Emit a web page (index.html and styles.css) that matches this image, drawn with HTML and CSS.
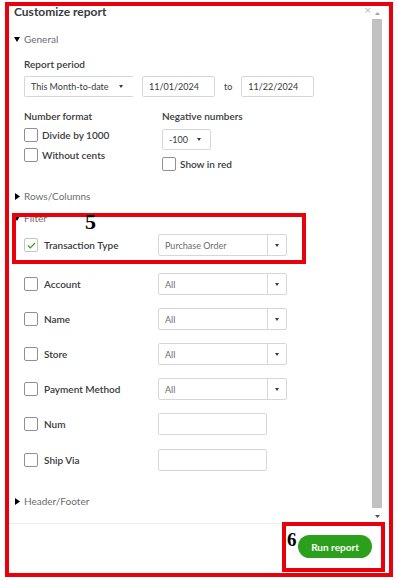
FILE: index.html
```html
<!DOCTYPE html>
<html lang="en">
<head>
  <meta charset="UTF-8">
  <meta name="viewport" content="width=device-width, initial-scale=1.0">
  <title>Customize report</title>
  <link rel="stylesheet" href="styles.css">
</head>
<body>

<div class="frame">
  <div class="main">
    <div class="content">
      <h1 class="title">Customize report</h1>

      <div class="section-head open">
        <svg class="tri" width="6" height="5" viewBox="0 0 6 5"><path d="M0 0h6L3 5z"/></svg>
        General
      </div>

      <div class="section-body">
        <div class="label period-label">Report period</div>
        <div class="period-row">
          <div class="select period-select">This Month-to-date <span class="caret"></span></div>
          <div class="input date date-from">11/01/2024</div>
          <span class="to">to</span>
          <div class="input date">11/22/2024</div>
        </div>

        <div class="number-grid">
          <div class="col col-left">
            <div class="label">Number format</div>
            <label class="check-row first"><span class="box"></span>Divide by 1000</label>
            <label class="check-row"><span class="box"></span>Without cents</label>
          </div>
          <div class="col">
            <div class="label">Negative numbers</div>
            <div class="select neg-select">-100 <span class="caret"></span></div>
            <label class="check-row red-row"><span class="box"></span>Show in red</label>
          </div>
        </div>
      </div>

      <div class="section-head closed rows-head">
        <svg class="tri" width="5" height="7" viewBox="0 0 5 7"><path d="M0 0l5 3.5L0 7z"/></svg>
        Rows/Columns
      </div>

      <div class="section-head open filter-head">
        <svg class="tri" width="6" height="5" viewBox="0 0 6 5"><path d="M0 0h6L3 5z"/></svg>
        Filter
      </div>

      <div class="section-body filters">
        <div class="filter-row tt-row">
          <label class="filter-label"><span class="box checked"><svg width="9" height="7" viewBox="0 0 9 7"><path d="M1 3.5l2.3 2.3L8 1" fill="none" stroke="#2ca01c" stroke-width="1.2"/></svg></span>Transaction Type</label>
          <div class="dropdown"><span>Purchase Order</span><span class="drop-btn"><span class="caret"></span></span></div>
        </div>
        <div class="filter-row account-row">
          <label class="filter-label"><span class="box"></span>Account</label>
          <div class="dropdown"><span>All</span><span class="drop-btn"><span class="caret"></span></span></div>
        </div>
        <div class="filter-row">
          <label class="filter-label"><span class="box"></span>Name</label>
          <div class="dropdown"><span>All</span><span class="drop-btn"><span class="caret"></span></span></div>
        </div>
        <div class="filter-row">
          <label class="filter-label"><span class="box"></span>Store</label>
          <div class="dropdown"><span>All</span><span class="drop-btn"><span class="caret"></span></span></div>
        </div>
        <div class="filter-row">
          <label class="filter-label"><span class="box"></span>Payment Method</label>
          <div class="dropdown"><span>All</span><span class="drop-btn"><span class="caret"></span></span></div>
        </div>
        <div class="filter-row">
          <label class="filter-label"><span class="box"></span>Num</label>
          <div class="input text-field"></div>
        </div>
        <div class="filter-row ship-row">
          <label class="filter-label"><span class="box"></span>Ship Via</label>
          <div class="input text-field"></div>
        </div>
      </div>

      <div class="section-head closed footer-head">
        <svg class="tri" width="5" height="7" viewBox="0 0 5 7"><path d="M0 0l5 3.5L0 7z"/></svg>
        Header/Footer
      </div>
    </div>

    <div class="scrollbar">
      <span class="close">&times;</span>
      <svg class="arrow-up" width="5" height="3" viewBox="0 0 5 3"><path d="M0 3L2.5 0 5 3z"/></svg>
      <div class="thumb"></div>
      <svg class="arrow-down" width="5" height="3" viewBox="0 0 5 3"><path d="M0 0h5L2.5 3z"/></svg>
    </div>
  </div>

  <div class="footer">
    <button class="run-btn">Run report</button>
  </div>

  <!-- annotation marks -->
  <div class="mark mark-5"><span>5</span></div>
  <div class="mark mark-6"><span>6</span></div>
</div>

</body>
</html>
```

FILE: styles.css
```css
body {
  margin: 0;
  background: #fff;
  font-family: Lato, "Open Sans", sans-serif;
  color: #393a3d;
}

.frame {
  position: relative;
  box-sizing: border-box;
  margin: 2px 0 0 5px;
  width: 388px;
  height: 575px;
  border: 4px solid #e8000b;
  display: flex;
  flex-direction: column;
}

.main {
  display: flex;
  height: 517px;
}

.content {
  flex: 1;
  padding-left: 5px;
}

.title {
  margin: -1px 0 0;
  font-size: 12px;
  line-height: 14px;
  font-weight: 700;
  color: #393a3d;
}

.section-head {
  display: flex;
  align-items: center;
  height: 14px;
  margin-top: 13px;
  font-size: 10px;
  color: #6b6c72;
}

.section-head .tri {
  fill: #000;
  margin-right: 4px;
}

.section-head.closed .tri {
  margin-left: 1px;
  margin-right: 4px;
}

.rows-head { margin-top: 18px; }
.filter-head { margin-top: 8px; }
.footer-head { margin-top: 23px; }

.section-body {
  padding-left: 10px;
}

.label {
  font-size: 10px;
  line-height: 14px;
  font-weight: 600;
  color: #393a3d;
}

.period-label { margin-top: 11px; }

.period-row {
  display: flex;
  align-items: center;
  margin-top: 5px;
  height: 21px;
}

.select, .input {
  box-sizing: border-box;
  height: 21px;
  border: 1px solid #d4d7dc;
  border-radius: 2px;
  font-size: 9px;
  color: #393a3d;
  display: flex;
  align-items: center;
  padding-left: 6px;
}

.caret {
  display: inline-block;
  width: 0;
  height: 0;
  border-left: 2.5px solid transparent;
  border-right: 2.5px solid transparent;
  border-top: 3px solid #393a3d;
}

.period-select {
  width: 109px;
  border-right: none;
  border-radius: 2px 0 0 2px;
}

.period-select .caret {
  margin-left: 10px;
}

.date {
  width: 73px;
}

.date-from {
  margin-left: 9px;
}

.to {
  font-size: 9px;
  margin: 0 9px;
}

.number-grid {
  display: flex;
  margin-top: 12px;
}

.col-left {
  width: 138px;
}

.check-row {
  display: flex;
  align-items: center;
  height: 14px;
  margin-top: 6px;
  font-size: 10px;
  font-weight: 600;
  color: #393a3d;
}

.check-row.first { margin-top: 5px; }

.box {
  box-sizing: border-box;
  width: 14px;
  height: 14px;
  border: 1px solid #8d9096;
  border-radius: 2px;
  margin-right: 4px;
  display: flex;
  align-items: center;
  justify-content: center;
  flex-shrink: 0;
}

.box.checked {
  border-color: #c1c4c9;
}

.neg-select {
  width: 49px;
  margin-top: 6px;
}

.neg-select .caret {
  margin-left: 9px;
}

.red-row { margin-top: 7px; }

.filters {
  padding-top: 9px;
}

.filter-row {
  display: flex;
  align-items: center;
  height: 22px;
  margin-top: 13px;
}

.filter-row.tt-row { margin-top: 0; }
.filter-row.account-row { margin-top: 17px; }
.filter-row.ship-row { margin-top: 14px; }

.filter-label {
  width: 134px;
  display: flex;
  align-items: center;
  font-size: 10px;
  font-weight: 600;
  color: #393a3d;
}

.filter-label .box {
  margin-right: 6px;
}

.dropdown {
  box-sizing: border-box;
  width: 129px;
  height: 22px;
  border: 1px solid #d4d7dc;
  border-radius: 2px;
  display: flex;
  align-items: center;
  justify-content: space-between;
  font-size: 9px;
  color: #6b6c72;
  padding-left: 6px;
}

.drop-btn {
  width: 18px;
  height: 100%;
  border-left: 1px solid #d4d7dc;
  display: flex;
  align-items: center;
  justify-content: center;
}

.text-field {
  width: 109px;
  height: 22px;
}

.scrollbar {
  position: relative;
  width: 10px;
  margin-right: 7px;
  display: flex;
  flex-direction: column;
  align-items: center;
}

.close {
  position: absolute;
  left: -8px;
  top: -1px;
  font-size: 9px;
  line-height: 10px;
  color: #b5b5b5;
  font-family: "DejaVu Sans", sans-serif;
}

.arrow-up {
  fill: #a3a3a3;
  margin-top: 6px;
}

.thumb {
  width: 10px;
  height: 489px;
  margin-top: 4px;
  background: #c1c1c1;
}

.arrow-down {
  fill: #505050;
  margin-top: 7px;
}

.footer {
  flex: 1;
  border-top: 1px solid #eceef1;
  display: flex;
  justify-content: flex-end;
  align-items: flex-start;
  padding: 11px 17px 0 0;
}

.run-btn {
  width: 74px;
  height: 23px;
  border: none;
  border-radius: 12px;
  background: #2ca01c;
  color: #fff;
  font-family: Lato, "Open Sans", sans-serif;
  font-size: 10px;
  font-weight: 700;
  padding: 0;
}

.mark {
  position: absolute;
  box-sizing: border-box;
  border: 4px solid #e8000b;
  pointer-events: none;
}

.mark span {
  position: absolute;
  font-family: "Liberation Serif", "Times New Roman", serif;
  font-weight: 700;
  color: #000;
}

.mark-5 {
  left: 3px;
  top: 207px;
  width: 294px;
  height: 51px;
}

.mark-5 span {
  left: 69px;
  top: -6px;
  font-size: 22px;
  line-height: 22px;
}

.mark-6 {
  left: 273px;
  top: 516px;
  width: 103px;
  height: 50px;
}

.mark-6 span {
  left: 1px;
  top: 4px;
  font-size: 19px;
  line-height: 19px;
}
```
